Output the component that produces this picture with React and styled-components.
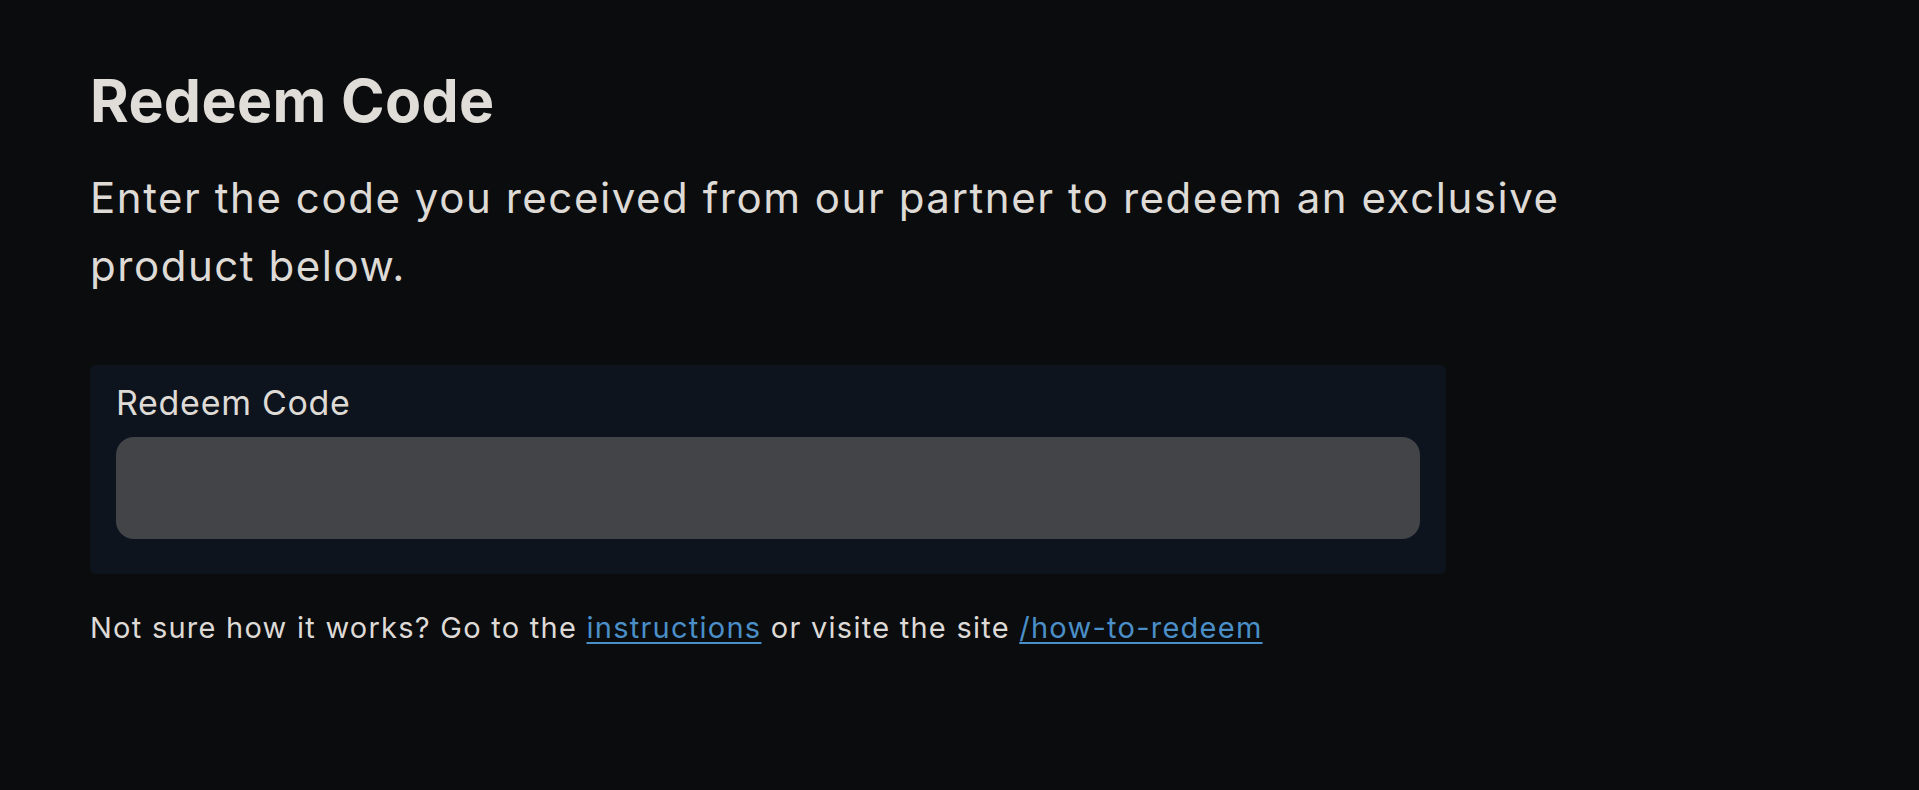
import React from "react";
import styled, { createGlobalStyle } from "styled-components";

const GlobalStyle = createGlobalStyle`
  html, body {
    margin: 0;
    padding: 0;
    background: #0b0c0e;
  }
  body {
    font-family: "Inter", "Liberation Sans", sans-serif;
    color: #dedad6;
  }
`;

const Page = styled.main`
  min-height: 790px;
  box-sizing: border-box;
  padding: 66px 90px 0;
  background: #0b0c0e;
`;

const Title = styled.h1`
  margin: 0;
  font-size: 59px;
  line-height: 1.2;
  font-weight: 700;
  letter-spacing: 0.35px;
  color: #e0dcd8;
`;

const Intro = styled.p`
  margin: 27px 0 0;
  max-width: 1540px;
  font-size: 42px;
  line-height: 68px;
  font-weight: 400;
  letter-spacing: 1.55px;
  color: #dedad6;
`;

const Card = styled.section`
  margin-top: 65px;
  width: 1356px;
  box-sizing: border-box;
  padding: 18px 26px 35px;
  background: #0e141d;
  border-radius: 6px;
  display: flex;
  flex-direction: column;
  gap: 13px;
`;

const Label = styled.label`
  font-size: 34px;
  line-height: 1.2;
  letter-spacing: 0.7px;
  color: #dedad6;
`;

const CodeInput = styled.input`
  height: 102px;
  box-sizing: border-box;
  border: none;
  outline: none;
  border-radius: 18px;
  background: #434448;
  padding: 0 28px;
  font-family: inherit;
  font-size: 34px;
  color: #e0dcd8;
`;

const Help = styled.p`
  margin: 32px 0 0;
  font-size: 29px;
  line-height: 1.5;
  letter-spacing: 1.25px;
  color: #dedad6;
`;

const Link = styled.a`
  color: #4a8fc8;
  text-decoration: underline;
  text-decoration-thickness: 2px;
  text-underline-offset: 4px;
`;

export default function App() {
  return (
    <>
      <GlobalStyle />
      <Page>
        <Title>Redeem Code</Title>
        <Intro>
          Enter the code you received from our partner to redeem an exclusive
          product below.
        </Intro>
        <Card>
          <Label htmlFor="redeem-code">Redeem Code</Label>
          <CodeInput id="redeem-code" type="text" />
        </Card>
        <Help>
          Not sure how it works? Go to the <Link href="#">instructions</Link> or
          visite the site <Link href="#">/how-to-redeem</Link>
        </Help>
      </Page>
    </>
  );
}
